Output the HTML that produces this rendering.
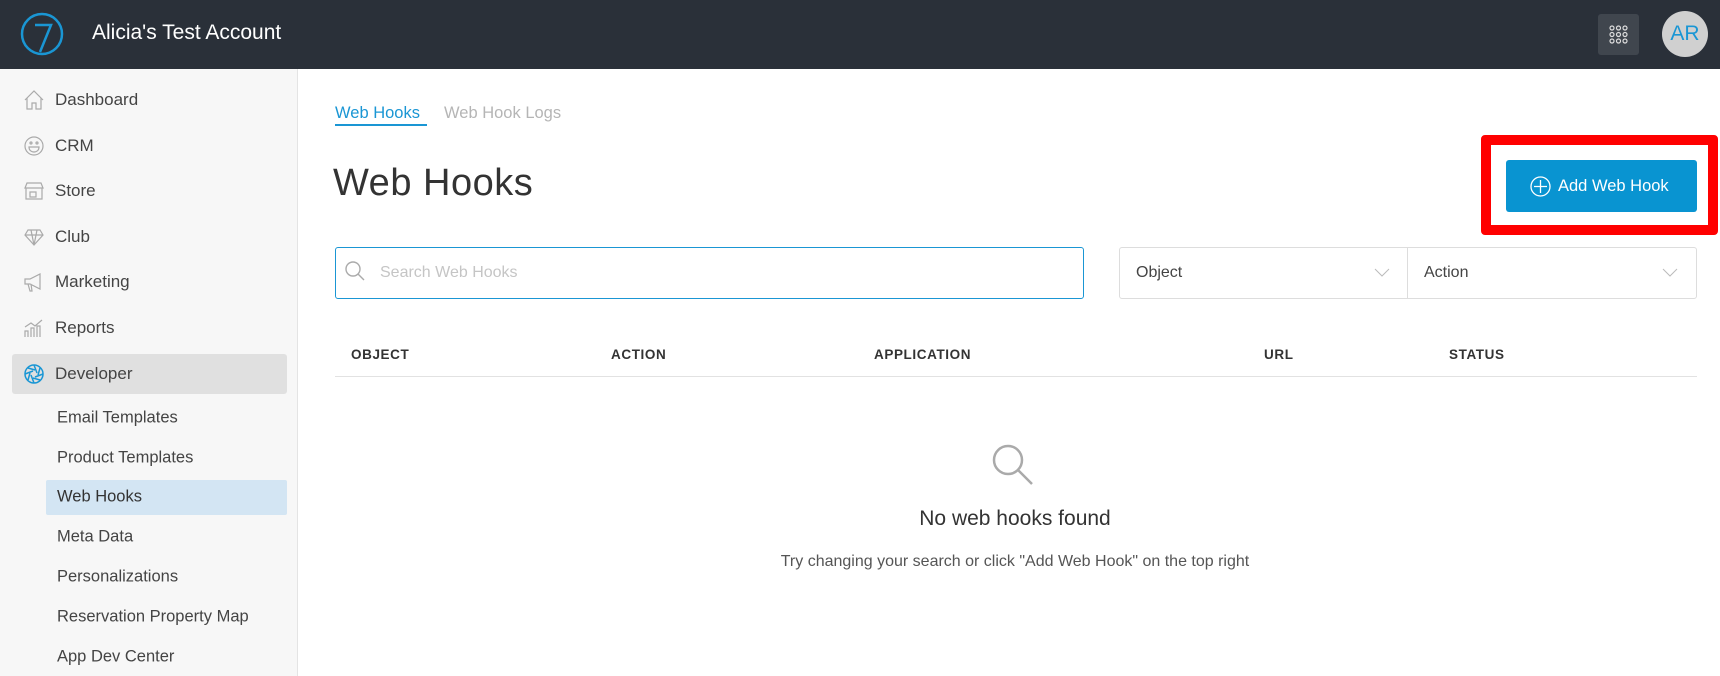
<!DOCTYPE html>
<html><head><meta charset="utf-8"><style>
*{margin:0;padding:0;box-sizing:border-box}
body{width:1720px;height:676px;overflow:hidden;font-family:"Liberation Sans",sans-serif;background:#fff;position:relative;color:#333}
div{white-space:nowrap}
.a{position:absolute}
.hdr{left:0;top:0;width:1720px;height:69px;background:#2a3039}
.side{left:0;top:69px;width:298px;height:607px;background:#f7f7f7;border-right:1px solid #e4e4e4}
.ni{position:absolute;left:55px;font-size:17px;color:#444;transform:translateY(-50%)}
.ic{position:absolute;left:23px;transform:translateY(-50%)}
.si{position:absolute;left:57px;font-size:16.5px;color:#444;transform:translateY(-50%)}
.th{position:absolute;top:347px;font-size:13.5px;font-weight:bold;letter-spacing:.6px;color:#333}
</style></head><body>
<div class="a hdr"></div>
<svg class="a" style="left:20px;top:12px" width="44" height="44" viewBox="0 0 44 44"><circle cx="22" cy="22" r="20" fill="none" stroke="#1a96d4" stroke-width="2.5"/><path d="M15 13h16L20 40" fill="none" stroke="#1a96d4" stroke-width="2.5"/></svg>
<div class="a" style="left:92px;top:21px;font-size:21px;color:#fff">Alicia's Test Account</div>
<div class="a" style="left:1598px;top:14px;width:41px;height:41px;background:#40464e;border-radius:3px"></div>
<svg class="a" style="left:1608px;top:24px" width="21" height="21" viewBox="0 0 21 21" fill="none" stroke="#ddd" stroke-width="1.2"><circle cx="4" cy="4" r="2"/><circle cx="10.5" cy="4" r="2"/><circle cx="17" cy="4" r="2"/><circle cx="4" cy="10.5" r="2"/><circle cx="10.5" cy="10.5" r="2"/><circle cx="17" cy="10.5" r="2"/><circle cx="4" cy="17" r="2"/><circle cx="10.5" cy="17" r="2"/><circle cx="17" cy="17" r="2"/></svg>
<div class="a" style="left:1662px;top:11px;width:46px;height:46px;border-radius:50%;background:#d0d0d0;color:#1a96d4;font-size:21px;line-height:46px;text-align:center">AR</div>

<div class="a side">
<div class="a" style="left:12px;top:285px;width:275px;height:40px;background:#e0e0e0;border-radius:3px"></div>
<div class="a" style="left:46px;top:411px;width:241px;height:35px;background:#d3e5f3;border-radius:2px"></div>
</div>
<div class="a" style="left:0;top:0;width:298px">
<svg class="ic" style="top:100px" width="22" height="22" viewBox="0 0 22 22" fill="none" stroke="#aaa" stroke-width="1.2"><path d="M2 11L11 2l9 9M4 9v11h5v-6h4v6h5V9"/></svg>
<div class="ni" style="top:100px">Dashboard</div>
<svg class="ic" style="top:146px" width="22" height="22" viewBox="0 0 22 22" fill="none" stroke="#aaa" stroke-width="1.2"><circle cx="11" cy="11" r="9"/><path d="M6 12h10c0 3-2 5-5 5s-5-2-5-5z"/><circle cx="8" cy="8" r="1"/><circle cx="14" cy="8" r="1"/></svg>
<div class="ni" style="top:146px">CRM</div>
<svg class="ic" style="top:191px" width="22" height="22" viewBox="0 0 22 22" fill="none" stroke="#aaa" stroke-width="1.2"><path d="M2 8l2-5h14l2 5zM3 8v11h16V8M7 12h6v5H7z"/></svg>
<div class="ni" style="top:191px">Store</div>
<svg class="ic" style="top:237px" width="22" height="22" viewBox="0 0 22 22" fill="none" stroke="#aaa" stroke-width="1.2"><path d="M5 4h12l3 5-9 10L2 9zM2 9h18M8 4l3 15 3-15"/></svg>
<div class="ni" style="top:237px">Club</div>
<svg class="ic" style="top:282px" width="22" height="22" viewBox="0 0 22 22" fill="none" stroke="#aaa" stroke-width="1.2"><path d="M2 8h5l10-5v15L7 13H2zM5 13l2 7h2l-1-7"/></svg>
<div class="ni" style="top:282px">Marketing</div>
<svg class="ic" style="top:328px" width="22" height="22" viewBox="0 0 22 22" fill="none" stroke="#aaa" stroke-width="1.2"><path d="M2 20V14h3v6M8 20v-9h3v9M14 20V9h3v11M2 10l6-4 4 3 7-6"/></svg>
<div class="ni" style="top:328px">Reports</div>
<svg class="ic" style="top:374px" width="22" height="22" viewBox="0 0 22 22" fill="none" stroke="#1a96d4" stroke-width="1.5"><circle cx="11" cy="11" r="9"/><path d="M11 2l3 8M20 11l-8 3M11 20l-3-8M2 11l8-3M5 5l7 2M17 5l-2 7M17 17l-7-2M5 17l2-7"/></svg>
<div class="ni" style="top:374px">Developer</div>
<div class="si" style="top:418px">Email Templates</div>
<div class="si" style="top:458px">Product Templates</div>
<div class="si" style="top:497px;color:#333">Web Hooks</div>
<div class="si" style="top:537px">Meta Data</div>
<div class="si" style="top:577px">Personalizations</div>
<div class="si" style="top:617px">Reservation Property Map</div>
<div class="si" style="top:657px">App Dev Center</div>
</div>

<div class="a" style="left:335px;top:104px;font-size:16.5px;color:#1a96d4">Web Hooks</div>
<div class="a" style="left:335px;top:124px;width:92px;height:2px;background:#1a96d4"></div>
<div class="a" style="left:444px;top:104px;font-size:16.5px;color:#b5b5b5">Web Hook Logs</div>
<div class="a" style="left:333px;top:162px;font-size:38px;color:#333;font-weight:300;letter-spacing:.5px">Web Hooks</div>

<div class="a" style="left:1481px;top:135px;width:237px;height:100px;border:10px solid #f00;border-radius:4px"></div>
<div class="a" style="left:1506px;top:160px;width:191px;height:52px;background:#0994d1;border-radius:3px;color:#fff;font-size:16.5px;line-height:52px;padding-left:52px">Add Web Hook</div>
<svg class="a" style="left:1530px;top:176px" width="21" height="21" viewBox="0 0 21 21" fill="none" stroke="#fff" stroke-width="1.3"><circle cx="10.5" cy="10.5" r="9.5"/><path d="M10.5 4v13M4 10.5h13"/></svg>

<div class="a" style="left:335px;top:247px;width:749px;height:52px;border:1px solid #1a96d4;border-radius:3px"></div>
<svg class="a" style="left:344px;top:260px" width="22" height="22" viewBox="0 0 22 22" fill="none" stroke="#aaa" stroke-width="1.4"><circle cx="9" cy="9" r="7"/><path d="M14 14l6 6"/></svg>
<div class="a" style="left:380px;top:264px;font-size:16px;color:#c5c5c5">Search Web Hooks</div>

<div class="a" style="left:1119px;top:247px;width:578px;height:52px;border:1px solid #ddd;border-radius:3px"></div>
<div class="a" style="left:1407px;top:247px;width:1px;height:52px;background:#ddd"></div>
<div class="a" style="left:1136px;top:264px;font-size:16px;color:#444">Object</div>
<div class="a" style="left:1424px;top:264px;font-size:16px;color:#444">Action</div>
<svg class="a" style="left:1374px;top:268px" width="16" height="10" viewBox="0 0 16 10" fill="none" stroke="#bbb"><path d="M1 1l7 7 7-7"/></svg>
<svg class="a" style="left:1662px;top:268px" width="16" height="10" viewBox="0 0 16 10" fill="none" stroke="#bbb"><path d="M1 1l7 7 7-7"/></svg>

<div class="th" style="left:351px">OBJECT</div>
<div class="th" style="left:611px">ACTION</div>
<div class="th" style="left:874px">APPLICATION</div>
<div class="th" style="left:1264px">URL</div>
<div class="th" style="left:1449px">STATUS</div>
<div class="a" style="left:335px;top:376px;width:1362px;height:1px;background:#e2e2e2"></div>

<svg class="a" style="left:990px;top:442px" width="46" height="46" viewBox="0 0 46 46" fill="none" stroke="#aaa" stroke-width="2.5"><circle cx="18" cy="18" r="14"/><path d="M28 28l14 14"/></svg>
<div class="a" style="left:0;width:2030px;top:507px;text-align:center;font-size:21px;color:#333">No web hooks found</div>
<div class="a" style="left:0;width:2030px;top:553px;text-align:center;font-size:16px;color:#555">Try changing your search or click "Add Web Hook" on the top right</div>
</body></html>
